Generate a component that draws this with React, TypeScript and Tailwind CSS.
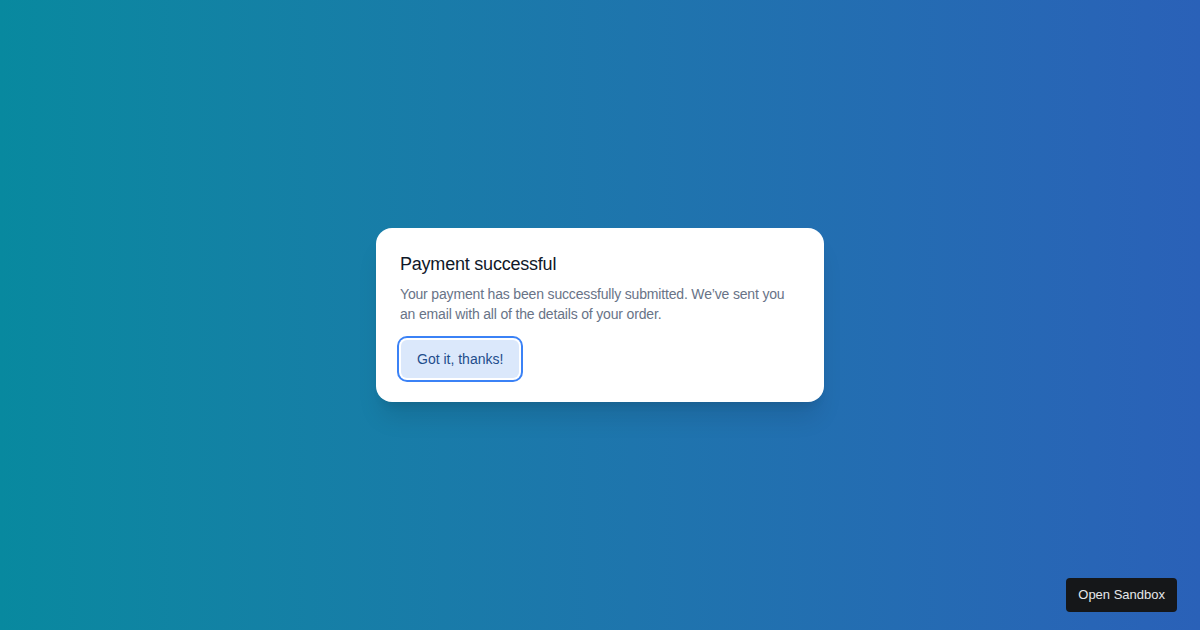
export default function App() {
  return (
    <div
      className="relative w-[1200px] h-[630px] bg-gradient-to-r from-[#08899f] to-[#2a61b8] flex items-center justify-center"
      style={{ fontFamily: '"Liberation Sans", Arial, sans-serif' }}
    >
      <div className="w-[448px] bg-white rounded-2xl p-6 shadow-xl">
        <h2 className="text-lg leading-6 text-gray-900 mb-2 tracking-[-0.012em]">Payment successful</h2>
        <p className="text-sm leading-5 text-[#687387] tracking-[-0.012em]">
          Your payment has been successfully submitted. We’ve sent you an email with all of the details of your order.
        </p>
        <div className="mt-4">
          <button className="h-[38px] px-4 rounded-md bg-[#dbe8fb] text-[#1e4d8c] text-sm ring-2 ring-[#3b82f6] ring-offset-2 ring-offset-white ml-[1px]">
            Got it, thanks!
          </button>
        </div>
      </div>
      <div className="absolute right-[23px] bottom-[18px] h-[34px] px-[12px] rounded bg-[#151719] text-[#e5e7eb] text-[13px] flex items-center">
        Open Sandbox
      </div>
    </div>
  );
}
